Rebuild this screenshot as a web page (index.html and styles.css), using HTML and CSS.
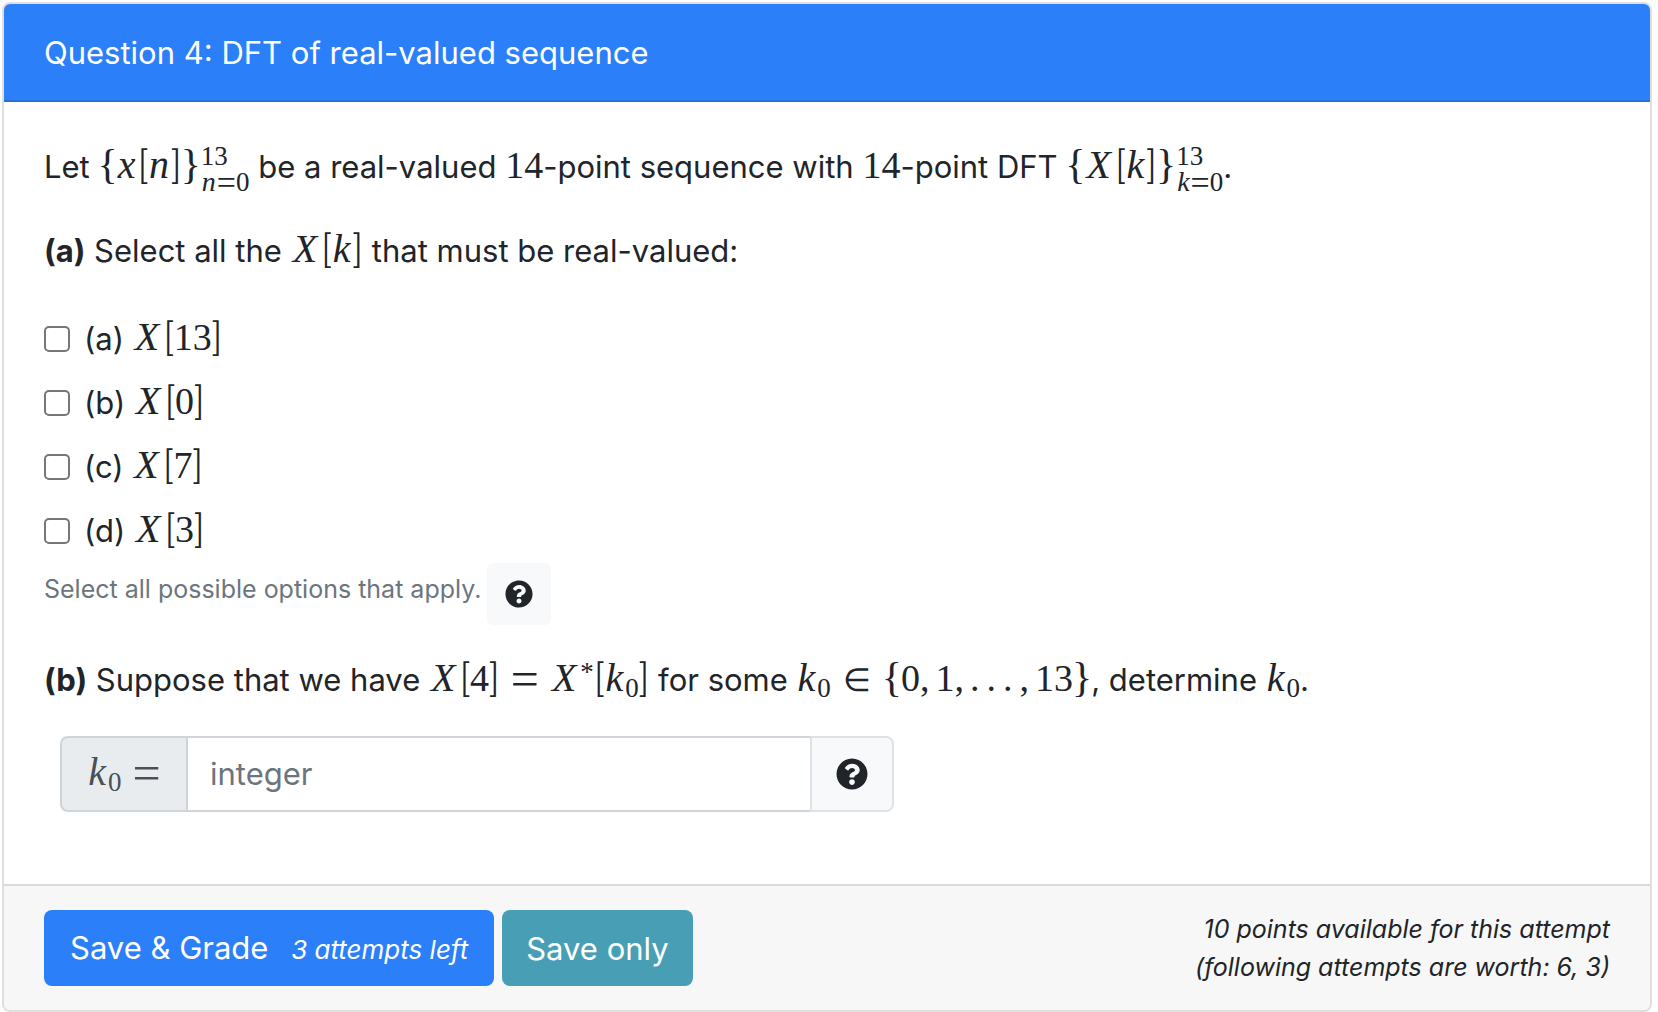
FILE: index.html
```html
<!DOCTYPE html>
<html lang="en">
<head>
  <meta charset="UTF-8">
  <meta name="viewport" content="width=device-width, initial-scale=1.0">
  <title>Question 4: DFT of real-valued sequence</title>
  <link rel="stylesheet" href="styles.css">
</head>
<body>
  <form class="card">
    <!-- Header -->
    <div class="card-header">
      <h1>Question 4: DFT of real-valued sequence</h1>
    </div>

    <!-- Question body -->
    <div class="card-body">
      <p>Let <span class="math"><b class="brace">{</b><i>x</i><b>[</b><i>n</i><b>]</b><b class="brace">}</b><span class="limits"><span>13</span><span><i>n</i><span class="eq">=</span>0</span></span></span> be a real-valued <span class="math">14</span>-point sequence with <span class="math">14</span>-point DFT <span class="math"><b class="brace">{</b><i class="cap">X</i><b>[</b><i>k</i><b>]</b><b class="brace">}</b><span class="limits"><span>13</span><span><i>k</i><span class="eq">=</span>0</span></span></span>.</p>

      <p class="part"><strong>(a)</strong> Select all the <span class="math"><i class="cap">X</i><b>[</b><i>k</i><b>]</b></span> that must be real-valued:</p>

      <div class="options">
        <div class="form-check">
          <input type="checkbox" id="option-a" name="real" value="a">
          <label for="option-a">(a) <span class="math"><i class="cap">X</i><b>[</b>13<b>]</b></span></label>
        </div>
        <div class="form-check">
          <input type="checkbox" id="option-b" name="real" value="b">
          <label for="option-b">(b) <span class="math"><i class="cap">X</i><b>[</b>0<b>]</b></span></label>
        </div>
        <div class="form-check">
          <input type="checkbox" id="option-c" name="real" value="c">
          <label for="option-c">(c) <span class="math"><i class="cap">X</i><b>[</b>7<b>]</b></span></label>
        </div>
        <div class="form-check">
          <input type="checkbox" id="option-d" name="real" value="d">
          <label for="option-d">(d) <span class="math"><i class="cap">X</i><b>[</b>3<b>]</b></span></label>
        </div>
      </div>

      <div class="help-row">
        <small>Select all possible options that apply.</small>
        <button type="button" class="help-btn" aria-label="Help">
          <svg viewBox="0 0 512 512" aria-hidden="true"><path fill="currentColor" d="M504 256c0 136.997-111.043 248-248 248S8 392.997 8 256C8 119.083 119.043 8 256 8s248 111.083 248 248zM262.655 90c-54.497 0-89.255 22.957-116.549 63.758-3.536 5.286-2.353 12.415 2.715 16.258l34.699 26.31c5.205 3.947 12.621 3.008 16.665-2.122 17.864-22.658 30.113-35.797 57.303-35.797 20.429 0 45.698 13.148 45.698 32.958 0 14.976-12.363 22.667-32.534 33.976C247.128 238.528 216 254.941 216 296v4c0 6.627 5.373 12 12 12h56c6.627 0 12-5.373 12-12v-1.333c0-28.462 83.186-29.647 83.186-106.667 0-58.002-60.165-102-116.531-102zM256 338c-25.365 0-46 20.635-46 46 0 25.364 20.635 46 46 46s46-20.636 46-46c0-25.365-20.635-46-46-46z"/></svg>
        </button>
      </div>

      <p class="part"><strong>(b)</strong> Suppose that we have <span class="math"><i class="cap">X</i><b>[</b>4<b>]</b><span class="rel">=</span><i class="cap">X</i><sup>*</sup><b>[</b><i>k</i><sub>0</sub><b>]</b></span> for some <span class="math"><i>k</i><sub>0</sub><span class="in">∈</span><b class="brace">{</b>0<span class="comma">,</span>1<span class="comma">,</span><span class="dots"><span>.</span><span>.</span><span>.</span></span><span class="comma">,</span>13<b class="brace">}</b></span>, determine <span class="math"><i>k</i><sub>0</sub></span>.</p>

      <div class="input-group">
        <label for="k0" class="input-label"><span class="math"><i>k</i><sub>0</sub><span class="rel last">=</span></span></label>
        <input type="text" id="k0" name="k0" placeholder="integer" autocomplete="off">
        <button type="button" class="group-btn" aria-label="Help">
          <svg viewBox="0 0 512 512" aria-hidden="true"><path fill="currentColor" d="M504 256c0 136.997-111.043 248-248 248S8 392.997 8 256C8 119.083 119.043 8 256 8s248 111.083 248 248zM262.655 90c-54.497 0-89.255 22.957-116.549 63.758-3.536 5.286-2.353 12.415 2.715 16.258l34.699 26.31c5.205 3.947 12.621 3.008 16.665-2.122 17.864-22.658 30.113-35.797 57.303-35.797 20.429 0 45.698 13.148 45.698 32.958 0 14.976-12.363 22.667-32.534 33.976C247.128 238.528 216 254.941 216 296v4c0 6.627 5.373 12 12 12h56c6.627 0 12-5.373 12-12v-1.333c0-28.462 83.186-29.647 83.186-106.667 0-58.002-60.165-102-116.531-102zM256 338c-25.365 0-46 20.635-46 46 0 25.364 20.635 46 46 46s46-20.636 46-46c0-25.365-20.635-46-46-46z"/></svg>
        </button>
      </div>
    </div>

    <!-- Footer -->
    <div class="card-footer">
      <div class="actions">
        <button type="submit" class="btn btn-primary">Save &amp; Grade <em>3 attempts left</em></button>
        <button type="submit" class="btn btn-info">Save only</button>
      </div>
      <div class="points">
        10 points available for this attempt<br>
        (following attempts are worth: 6, 3)
      </div>
    </div>
  </form>
</body>
</html>
```
FILE: styles.css
```css
* {
  box-sizing: border-box;
}
body {
  margin: 0;
  padding: 2px 6px 0 2px;
  font-family: Inter, sans-serif;
  font-size: 31px;
  line-height: 48px;
  color: #212529;
  background-color: #fff;
}
.card {
  border: 2px solid #dfdfdf;
  border-radius: 8px;
  overflow: hidden;
}
.card-header {
  padding: 25px 40px 23px;
  color: #fff;
  background-color: #2b7ff8;
  border-bottom: 2px solid #2671dd;
}
.card-header h1 {
  margin: 0;
  font-size: 31px;
  font-weight: 400;
}
.card-body {
  padding: 41px 40px 72px;
}
p {
  margin: 0 0 36px;
}
p.part {
  margin-bottom: 32px;
}
strong {
  font-weight: 700;
}

/* Math */
.math {
  font-family: "Liberation Serif", serif;
  font-size: 38px;
  line-height: 1px;
  white-space: nowrap;
}
.math i {
  font-size: 40px;
  margin: 0 2px 0 1px;
}
.math .cap {
  margin: 0 4px 0 2px;
}
.math b {
  font-family: Roboto, sans-serif;
  font-size: 36px;
  font-weight: 300;
  margin: 0 1px;
}
.math .brace {
  font-family: "Liberation Serif", serif;
  font-size: 42px;
  font-weight: 400;
  margin: 0 -1px;
}
.math sup,
.math sub {
  font-size: 27px;
  line-height: 1px;
}
.math sub {
  vertical-align: -6px;
}
.math sup {
  vertical-align: 10px;
}
.math .limits {
  display: inline-flex;
  flex-direction: column;
  margin: -6px 0 -6px 1px;
  vertical-align: middle;
  font-size: 27px;
  line-height: 26px;
}
.math .limits i {
  margin: 0 1px;
  font-size: 28px;
  line-height: 1px;
}
.math .eq {
  font-size: 34px;
  line-height: 1px;
  vertical-align: -3px;
}
.math .rel {
  font-size: 50px;
  margin: 0 11px;
  vertical-align: -5px;
}
.math .rel.last {
  margin-right: 0;
}
.math .in {
  font-size: 32px;
  margin: 0 12px;
}
.comma {
  margin-right: 6px;
}
.dots span {
  margin-right: 7px;
}

/* Checkbox options */
.form-check {
  display: flex;
  align-items: center;
  height: 64px;
}
.form-check input {
  appearance: none;
  width: 26px;
  height: 26px;
  margin: 0 14px 0 0;
  border: 2px solid #767676;
  border-radius: 5px;
  background-color: #fff;
}
.form-check input:checked {
  background-color: #2b7ff8;
}
.help-row {
  display: flex;
  align-items: flex-start;
  gap: 6px;
  margin-bottom: 31px;
}
.help-row small {
  padding-top: 2px;
  font-size: 25px;
  color: #6c757d;
}
svg {
  display: block;
}
.help-btn {
  width: 64px;
  height: 62px;
  padding: 0;
  color: #212529;
  background-color: #f8f9fa;
  border: none;
  border-radius: 6px;
  cursor: pointer;
}
.help-btn svg {
  width: 28px;
  height: 28px;
  margin: auto;
}

/* Answer input */
.input-group {
  display: flex;
  max-width: 834px;
  height: 76px;
  margin-left: 16px;
}
.input-label {
  display: flex;
  align-items: center;
  justify-content: center;
  width: 126px;
  padding-top: 6px;
  color: #495057;
  background-color: #e9ecef;
  border: 2px solid #ced4da;
  border-right: none;
  border-radius: 8px 0 0 8px;
}
.input-group input {
  flex: 1;
  min-width: 0;
  padding: 0 22px;
  font: inherit;
  color: #495057;
  background-color: #fff;
  border: 2px solid #ced4da;
  border-right: none;
  border-radius: 0;
}
.input-group input::placeholder {
  color: #6c757d;
  opacity: 1;
}
.group-btn {
  width: 84px;
  padding: 0;
  color: #212529;
  background-color: #f8f9fa;
  border: 2px solid #dfe2e6;
  border-radius: 0 8px 8px 0;
  cursor: pointer;
}
.group-btn svg {
  width: 32px;
  height: 32px;
  margin: auto;
}

/* Footer */
.card-footer {
  display: flex;
  justify-content: space-between;
  align-items: center;
  padding: 24px 40px;
  background-color: #f7f7f7;
  border-top: 2px solid #dadada;
}
.actions {
  display: flex;
  gap: 8px;
}
.btn {
  height: 76px;
  padding: 2px 26px 0;
  font: inherit;
  color: #fff;
  border: none;
  border-radius: 8px;
  cursor: pointer;
}
.btn-primary {
  background-color: #2b7ff8;
}
.btn-info {
  padding: 2px 24px 0;
  background-color: #489fb5;
}
.btn em {
  margin-left: 14px;
  font-size: 26px;
}
.points {
  font-size: 25px;
  line-height: 38px;
  font-style: italic;
  text-align: right;
}
```
